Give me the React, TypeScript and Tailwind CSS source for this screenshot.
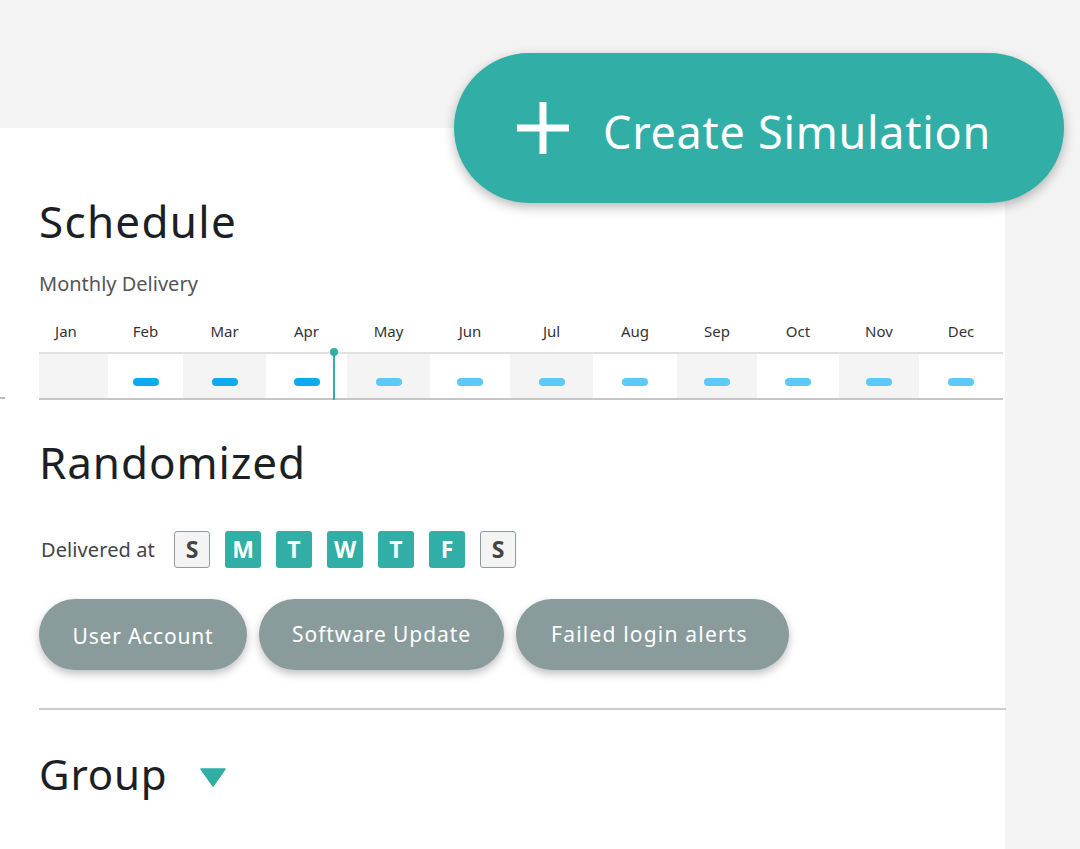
import React from "react";

const months = [
  { m: "Jan", w: "w-[69px]", grey: true, bar: "" },
  { m: "Feb", w: "w-[75px]", grey: false, bar: "dark" },
  { m: "Mar", w: "w-[83px]", grey: true, bar: "dark" },
  { m: "Apr", w: "w-[81px]", grey: false, bar: "dark" },
  { m: "May", w: "w-[83px]", grey: true, bar: "light" },
  { m: "Jun", w: "w-[80px]", grey: false, bar: "light" },
  { m: "Jul", w: "w-[83px]", grey: true, bar: "light" },
  { m: "Aug", w: "w-[84px]", grey: false, bar: "light" },
  { m: "Sep", w: "w-[80px]", grey: true, bar: "light" },
  { m: "Oct", w: "w-[82px]", grey: false, bar: "light" },
  { m: "Nov", w: "w-[80px]", grey: true, bar: "light" },
  { m: "Dec", w: "w-[84px]", grey: false, bar: "light" },
];

const days = [
  { d: "S", on: false },
  { d: "M", on: true },
  { d: "T", on: true },
  { d: "W", on: true },
  { d: "T", on: true },
  { d: "F", on: true },
  { d: "S", on: false },
];

export default function App() {
  return (
    <div className="relative w-[1080px] h-[849px] overflow-hidden bg-[#f4f4f4] font-['Noto_Sans','Open_Sans',sans-serif] text-[#1c1f24]">
      <div className="mt-[128px] w-[1005px] h-[721px] bg-white pl-[39px] flex flex-col">
        <h1 className="mt-[69px] text-[44px] leading-[48px] font-normal tracking-[1.3px]">Schedule</h1>
        <div className="mt-[27px] text-[20px] leading-[24px] text-[#555]">Monthly Delivery</div>

        <div className="mt-[26px] w-[964px] flex">
          {months.map((x) => (
            <div
              key={x.m}
              className={`${x.w} shrink-0 text-center text-[15px] leading-[18px] text-[#333] ${x.m === "Jan" ? "pr-[15px]" : ""}`}
            >
              {x.m}
            </div>
          ))}
        </div>

        <div className="relative mt-[12px] w-[964px] flex border-t-2 border-b-2 border-t-[#e0e0e0] border-b-[#c6c6c6] h-[48px]">
          {months.map((x) => (
            <div
              key={x.m}
              className={`${x.w} shrink-0 flex justify-center pt-[24px] ${x.grey ? "bg-[#f4f4f4]" : "bg-white"}`}
            >
              {x.bar === "dark" && <div className="w-[26px] h-[8px] rounded-full bg-[#0cabef]" />}
              {x.bar === "light" && <div className="w-[26px] h-[8px] rounded-full bg-[#5dc9f6]" />}
            </div>
          ))}
          <div className="absolute left-[294px] top-[-2px] w-[2px] h-[48px] bg-[#31aea5]" />
          <div className="absolute left-[291px] top-[-6px] w-[8px] h-[8px] rounded-full bg-[#31aea5]" />
        </div>

        <h2 className="mt-[38px] text-[44px] leading-[48px] font-normal tracking-[0.9px]">Randomized</h2>

        <div className="mt-[45px] flex items-center">
          <span className="ml-[2px] w-[133px] shrink-0 text-[20px] leading-[24px] text-[#444] tracking-[0.1px]">Delivered at</span>
          <div className="flex gap-[15px]">
            {days.map((x, i) => (
              <div
                key={i}
                className={`w-[36px] h-[37px] rounded-[3px] flex items-center justify-center text-[23px] font-bold ${
                  x.on
                    ? "bg-[#31aea5] text-white"
                    : "bg-[#f4f4f4] text-[#444] border-[1.5px] border-[#8e9b9d]"
                }`}
              >
                {x.d}
              </div>
            ))}
          </div>
        </div>

        <div className="mt-[31px] flex gap-[12px]">
          <div className="w-[208px] h-[71px] rounded-full bg-[#8a9b9c] text-white text-[21px] tracking-[0.8px] flex items-center justify-center pt-[4px] shadow-[0_4px_8px_rgba(0,0,0,0.25)]">
            User Account
          </div>
          <div className="w-[245px] h-[71px] rounded-full bg-[#8a9b9c] text-white text-[21px] tracking-[0.9px] flex items-center justify-center shadow-[0_4px_8px_rgba(0,0,0,0.25)]">
            Software Update
          </div>
          <div className="w-[273px] h-[71px] rounded-full bg-[#8a9b9c] text-white text-[21px] tracking-[1.2px] flex items-center justify-center pr-[6px] shadow-[0_4px_8px_rgba(0,0,0,0.25)]">
            Failed login alerts
          </div>
        </div>

        <div className="mt-[38px] w-[967px] h-[2px] bg-[#cccccc]" />

        <div className="mt-[40px] flex items-center">
          <h2 className="text-[42px] leading-[48px] font-normal tracking-[0.8px]">Group</h2>
          <svg className="ml-[33px] mt-[6px]" width="26" height="19" viewBox="0 0 26 19">
            <path d="M1 1 L25 1 L13 18 Z" fill="#31aea5" stroke="#31aea5" strokeWidth="1.5" strokeLinejoin="round" />
          </svg>
        </div>
      </div>

      <div className="absolute left-0 top-[397px] w-[5px] h-[2px] bg-[#bbbbbb]" />

      <div className="absolute left-[454px] top-[53px] w-[610px] h-[150px] rounded-full bg-[#31aea5] shadow-[0_4px_12px_rgba(0,0,0,0.28)] flex items-center pl-[63px]">
        <svg width="52" height="52" viewBox="0 0 52 52">
          <rect x="22.5" y="0" width="7" height="52" fill="white" />
          <rect x="0" y="22.5" width="52" height="7" fill="white" />
        </svg>
        <span className="ml-[34px] pt-[7px] text-white text-[45px] leading-none tracking-[0.7px]">Create Simulation</span>
      </div>
    </div>
  );
}
